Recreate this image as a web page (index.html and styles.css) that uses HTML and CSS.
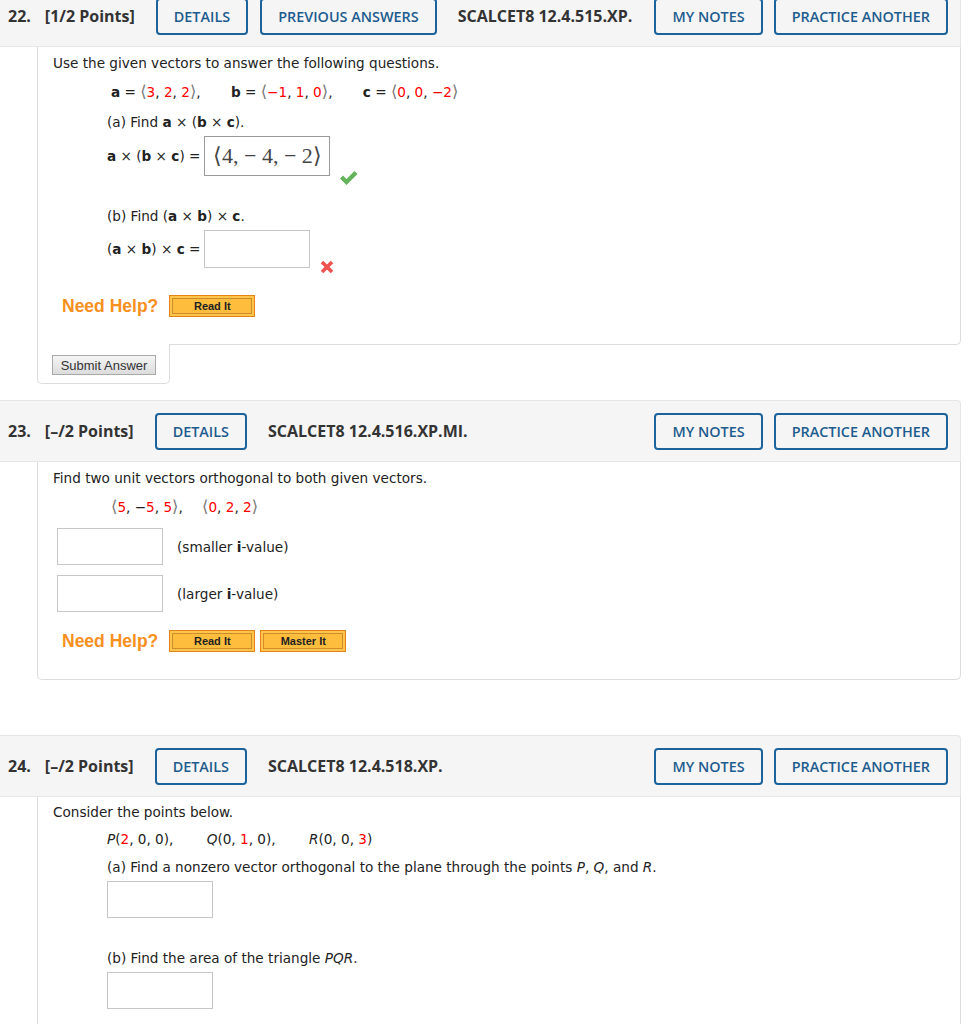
FILE: index.html
```html
<!DOCTYPE html>
<html lang="en">
<head>
    <meta charset="UTF-8">
    <title>Assignment - Vectors</title>
    <link rel="stylesheet" href="styles.css">
</head>
<body>
<div class="page">

    <!-- Question 22 -->
    <div class="question">
        <div class="q-header">
            <span class="q-num">22.</span>
            <span class="q-points">[1/2 Points]</span>
            <button class="q-btn">Details</button>
            <button class="q-btn last">Previous Answers</button>
            <span class="q-code">SCALCET8 12.4.515.XP.</span>
            <button class="q-btn push">My Notes</button>
            <button class="q-btn end">Practice Another</button>
        </div>
        <div class="q-body has-submit">
            <p class="stem">Use the given vectors to answer the following questions.</p>
            <div class="given">
                <span class="vec"><b>a</b> = <span class="br">⟨</span><span class="num">3</span>, <span class="num">2</span>, <span class="num">2</span><span class="br">⟩</span>,</span>
                <span class="vec"><b>b</b> = <span class="br">⟨</span><span class="num">−1</span>, <span class="num">1</span>, <span class="num">0</span><span class="br">⟩</span>,</span>
                <span class="vec"><b>c</b> = <span class="br">⟨</span><span class="num">0</span>, <span class="num">0</span>, <span class="num">−2</span><span class="br">⟩</span></span>
            </div>
            <p class="part-q">(a) Find <b>a</b> × (<b>b</b> × <b>c</b>).</p>
            <div class="answer-row">
                <span class="answer-label"><b>a</b> × (<b>b</b> × <b>c</b>) =</span>
                <span class="math-box">⟨4, − 4, − 2⟩</span>
                <svg class="mark" width="18" height="14" viewBox="0 0 18 14">
                    <polygon points="0,7.5 3,4.5 6.5,8 14.5,0 17.5,3 6.5,14" fill="#62b35a"/>
                </svg>
            </div>
            <p class="part-q part-gap">(b) Find (<b>a</b> × <b>b</b>) × <b>c</b>.</p>
            <div class="answer-row">
                <span class="answer-label">(<b>a</b> × <b>b</b>) × <b>c</b> =</span>
                <span class="text-box wide"></span>
                <svg class="mark wrong" width="14" height="14" viewBox="0 0 14 14">
                    <path d="M2 2 L12 12 M12 2 L2 12" stroke="#f05252" stroke-width="3.6"/>
                </svg>
            </div>
            <div class="help">
                <span class="help-label">Need Help?</span>
                <button class="help-btn">Read It</button>
            </div>
        </div>
        <div class="submit-tab">
            <button class="submit-btn">Submit Answer</button>
        </div>
    </div>

    <!-- Question 23 -->
    <div class="question no-submit">
        <div class="q-header">
            <span class="q-num">23.</span>
            <span class="q-points">[–/2 Points]</span>
            <button class="q-btn last">Details</button>
            <span class="q-code">SCALCET8 12.4.516.XP.MI.</span>
            <button class="q-btn push">My Notes</button>
            <button class="q-btn end">Practice Another</button>
        </div>
        <div class="q-body">
            <p class="stem">Find two unit vectors orthogonal to both given vectors.</p>
            <div class="given">
                <span class="vec short"><span class="br">⟨</span><span class="num">5</span>, −<span class="num">5</span>, <span class="num">5</span><span class="br">⟩</span>,</span>
                <span class="vec"><span class="br">⟨</span><span class="num">0</span>, <span class="num">2</span>, <span class="num">2</span><span class="br">⟩</span></span>
            </div>
            <div class="unit-row first">
                <span class="text-box"></span>
                <span class="unit-label">(smaller <b>i</b>-value)</span>
            </div>
            <div class="unit-row">
                <span class="text-box"></span>
                <span class="unit-label">(larger <b>i</b>-value)</span>
            </div>
            <div class="help help-tight">
                <span class="help-label">Need Help?</span>
                <button class="help-btn">Read It</button>
                <button class="help-btn">Master It</button>
            </div>
        </div>
    </div>

    <!-- Question 24 -->
    <div class="question">
        <div class="q-header">
            <span class="q-num">24.</span>
            <span class="q-points">[–/2 Points]</span>
            <button class="q-btn last">Details</button>
            <span class="q-code">SCALCET8 12.4.518.XP.</span>
            <button class="q-btn push">My Notes</button>
            <button class="q-btn end">Practice Another</button>
        </div>
        <div class="q-body open">
            <p class="stem">Consider the points below.</p>
            <div class="points">
                <span class="pt"><i>P</i>(<span class="num">2</span>, 0, 0),</span>
                <span class="pt"><i>Q</i>(0, <span class="num">1</span>, 0),</span>
                <span class="pt"><i>R</i>(0, 0, <span class="num">3</span>)</span>
            </div>
            <p class="part-q part-near">(a) Find a nonzero vector orthogonal to the plane through the points <i>P</i>, <i>Q</i>, and <i>R</i>.</p>
            <div class="box-row"><span class="text-box"></span></div>
            <p class="part-q part-gap">(b) Find the area of the triangle <i>PQR</i>.</p>
            <div class="box-row"><span class="text-box"></span></div>
        </div>
    </div>

</div>
</body>
</html>
```

FILE: styles.css
```css
/* Page basics */
body {
    margin: 0;
    font-family: "DejaVu Sans", Verdana, sans-serif;
    font-size: 13.6px;
    line-height: 18px;
    color: #222;
    background: #fff;
}
.page {
    width: 961px;
    margin-top: -15px;
}
.question {
    margin-bottom: 16px;
}
.question.no-submit {
    margin-bottom: 55px;
}

/* Question header bar */
.q-header {
    display: flex;
    align-items: center;
    height: 62px;
    box-sizing: border-box;
    padding: 0 12px 0 8px;
    background: #f5f5f5;
    border: 1px solid #e6e6e6;
    border-left: none;
    border-radius: 0 4px 0 0;
    font-family: "Open Sans", sans-serif;
    font-weight: 700;
    font-size: 16px;
    color: #333;
}
.q-num {
    margin-right: 14px;
}
.q-points {
    margin-right: 21px;
}
.q-btn {
    height: 37px;
    padding: 0 16px;
    margin-right: 12px;
    border: 2px solid #1c629b;
    border-radius: 4px;
    background: transparent;
    color: #1d5c8f;
    font-family: "Open Sans", sans-serif;
    font-weight: 600;
    font-size: 14.4px;
    text-transform: uppercase;
}
.q-btn.last {
    margin-right: 21px;
}
.q-btn.push {
    margin-left: auto;
    margin-right: 11px;
}
.q-btn.end {
    margin-right: 0;
}

/* Question body card */
.q-body {
    margin-left: 37px;
    padding: 7px 16px 27px 15px;
    border: 1px solid #dcdcdc;
    border-top: none;
    border-radius: 0 0 5px 5px;
    background: #fff;
}
.q-body.has-submit {
    border-bottom-left-radius: 0;
}
.q-body.open {
    border-bottom: none;
    padding-top: 6px;
    padding-bottom: 40px;
}
.stem {
    margin: 0;
}
.given {
    margin: 11px 0 0 58px;
}
.vec {
    margin-right: 26px;
}
.vec.short {
    margin-right: 15px;
}
.br {
    font-size: 1.2em;
    line-height: 0;
    color: #777;
}
.num {
    color: #f00;
}
.part-q {
    margin: 12px 0 0 54px;
}
.part-q.part-gap {
    margin-top: 31px;
}
.part-q.part-near {
    margin-top: 10px;
}

/* Answer rows */
.answer-row {
    display: flex;
    align-items: center;
    margin: 5px 0 0 54px;
}
.answer-label {
    width: 97px;
    white-space: nowrap;
}
.math-box {
    display: flex;
    align-items: center;
    width: 126px;
    height: 40px;
    box-sizing: border-box;
    padding-left: 8px;
    border: 1px solid #9a9a9a;
    font-family: "Liberation Serif", serif;
    font-size: 22px;
    color: #444;
    white-space: nowrap;
}
.text-box {
    display: block;
    width: 106px;
    height: 37px;
    box-sizing: border-box;
    border: 1px solid #c6c6c6;
    background: #fff;
}
.text-box.wide {
    height: 38px;
}
.mark {
    align-self: flex-end;
    margin: 0 0 -9px 10px;
}
.mark.wrong {
    margin-bottom: -6px;
}

/* Unit vector rows (question 23) */
.unit-row {
    display: flex;
    align-items: center;
    margin: 10px 0 0 4px;
}
.unit-row.first {
    margin-top: 12px;
}
.unit-label {
    margin-left: 14px;
}

/* Points row (question 24) */
.points {
    margin: 9px 0 0 54px;
}
.pt {
    margin-right: 29px;
}
.box-row {
    margin: 5px 0 0 54px;
}

/* Need help */
.help {
    display: flex;
    align-items: center;
    margin: 27px 0 0 9px;
}
.help.help-tight {
    margin-top: 18px;
}
.help-label {
    margin-right: 11px;
    font-family: "Liberation Sans", Arial, sans-serif;
    font-weight: bold;
    font-size: 17.5px;
    color: #f7901e;
}
.help-btn {
    width: 86px;
    height: 22px;
    margin-right: 5px;
    padding: 0;
    border: 1px solid #e5831a;
    background: #ffbd3e;
    box-shadow: inset 0 0 0 2px #ffc54a, inset 0 0 0 3px #cf8b2c;
    font-family: "Liberation Sans", Arial, sans-serif;
    font-weight: bold;
    font-size: 11px;
    color: #222;
}

/* Submit tab under question 22 */
.submit-tab {
    position: relative;
    width: fit-content;
    margin: -1px 0 0 37px;
    padding: 11px 13px 8px 14px;
    border: 1px solid #dcdcdc;
    border-top: none;
    border-radius: 0 0 5px 5px;
    background: #fff;
}
.submit-btn {
    display: block;
    width: 104px;
    height: 20px;
    padding: 0;
    border: 1px solid #a9a9a9;
    background: linear-gradient(#f5f5f5, #dcdcdc);
    font-family: "Liberation Sans", Arial, sans-serif;
    font-size: 13px;
    color: #333;
}
```
